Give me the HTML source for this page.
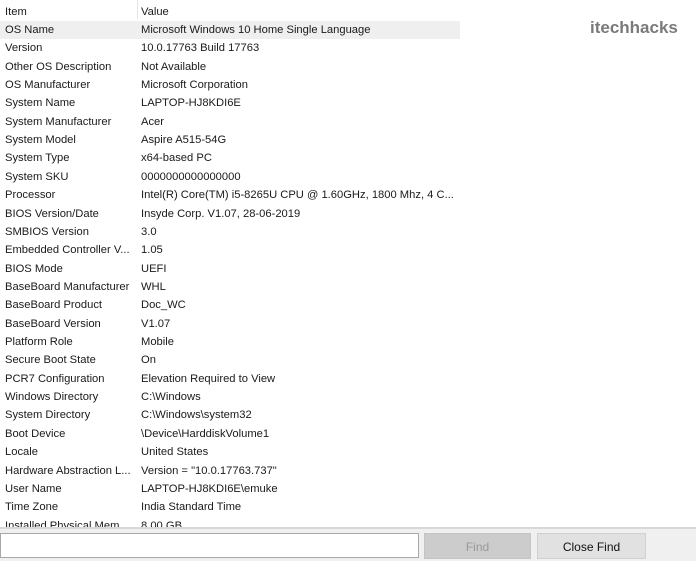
<!DOCTYPE html>
<html><head><style>
body{margin:0;width:696px;height:559px;background:#fff;overflow:hidden;position:relative;font-family:"Liberation Sans",sans-serif;font-size:11.2px;color:#1a1a1a}
.r{position:absolute;left:0;width:460px;height:18px;line-height:18px}
.r span{position:absolute;white-space:nowrap}
.a{left:5px}.b{left:141px}
.sel{background:#efefef}
#logo{position:absolute;left:590px;top:18px;font-size:17px;font-weight:bold;color:#7a7a7a}
#bot{position:absolute;left:0;top:527px;width:696px;height:32px;background:#f0f0f0;border-top:2px solid #d8d8d8}
#inp{position:absolute;left:0;top:4px;width:419px;height:25px;background:#fff;border:1px solid #a8a8a8;box-sizing:border-box}
.btn{position:absolute;top:4px;height:26px;line-height:26px;text-align:center;font-size:12px;box-sizing:border-box}
</style></head><body>
<div id="logo">itechhacks</div>
<div id="rows"></div>
<script>
var d=[["Item","Value"],["OS Name","Microsoft Windows 10 Home Single Language"],["Version","10.0.17763 Build 17763"],["Other OS Description","Not Available"],["OS Manufacturer","Microsoft Corporation"],["System Name","LAPTOP-HJ8KDI6E"],["System Manufacturer","Acer"],["System Model","Aspire A515-54G"],["System Type","x64-based PC"],["System SKU","0000000000000000"],["Processor","Intel(R) Core(TM) i5-8265U CPU @ 1.60GHz, 1800 Mhz, 4 C..."],["BIOS Version/Date","Insyde Corp. V1.07, 28-06-2019"],["SMBIOS Version","3.0"],["Embedded Controller V...","1.05"],["BIOS Mode","UEFI"],["BaseBoard Manufacturer","WHL"],["BaseBoard Product","Doc_WC"],["BaseBoard Version","V1.07"],["Platform Role","Mobile"],["Secure Boot State","On"],["PCR7 Configuration","Elevation Required to View"],["Windows Directory","C:\\Windows"],["System Directory","C:\\Windows\\system32"],["Boot Device","\\Device\\HarddiskVolume1"],["Locale","United States"],["Hardware Abstraction L...","Version = \"10.0.17763.737\""],["User Name","LAPTOP-HJ8KDI6E\\emuke"],["Time Zone","India Standard Time"],["Installed Physical Mem...","8.00 GB"]];
var h="";
d.forEach(function(x,i){var t=(11.5+18.36*i-9).toFixed(1);
h+='<div class="r'+(i==1?' sel':'')+'" style="top:'+t+'px"><span class="a">'+x[0].replace(/</g,'&lt;')+'</span><span class="b">'+x[1].replace(/</g,'&lt;')+'</span></div>';});
document.getElementById("rows").innerHTML=h;
</script>
<div style="position:absolute;left:137px;top:0;width:1px;height:19px;background:#e5e5e5"></div>
<div id="bot">
<div id="inp"></div>
<div class="btn" style="left:424px;width:107px;background:#cccccc;color:#9a9a9a;border:1px solid #c4c4c4">Find</div>
<div class="btn" style="left:537px;width:109px;background:#e1e1e1;color:#111;border:1px solid #d0d0d0">Close Find</div>
</div>
</body></html>
